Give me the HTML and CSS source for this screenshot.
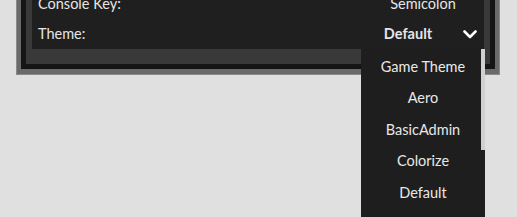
FILE: index.html
```html
<!DOCTYPE html>
<html>
<head>
    <link rel="stylesheet" href="styles.css">
</head>
<body>
    <div class="frame">
        <div class="frame-inner">
            <div class="frame-body">
                <div class="panel">
                    <div class="row">
                        <div class="label">Console Key:</div>
                        <div class="value">Semicolon</div>
                    </div>
                    <div class="row">
                        <div class="label">Theme:</div>
                        <div class="value select">
                            <span class="select-text">Default</span>
                            <span class="select-arrow">
                                <svg width="14" height="9" viewBox="0 0 14 9">
                                    <path d="M1.5 1.5 L7 7 L12.5 1.5" fill="none" stroke="#ffffff" stroke-width="2.6" stroke-linecap="round" stroke-linejoin="round"/>
                                </svg>
                            </span>
                            <div class="menu">
                                <div class="menu-item">Game Theme</div>
                                <div class="menu-item">Aero</div>
                                <div class="menu-item">BasicAdmin</div>
                                <div class="menu-item">Colorize</div>
                                <div class="menu-item">Default</div>
                                <div class="scroll-thumb"></div>
                            </div>
                        </div>
                    </div>
                </div>
            </div>
        </div>
    </div>
</body>
</html>
```

FILE: styles.css
```css
body {
    margin: 0;
    background-color: #e0e0e0;
    font-family: 'Lato', 'Liberation Sans', sans-serif;
    font-size: 14.5px;
    color: #e6e6e6;
    overflow: hidden;
    height: 217px;
}

/* frame layers: light edge, gray, black, dark gray, panel */
.frame {
    width: 474px;
    margin: -26px 0 0 16px;
    border: 1px solid #8a8a8a;
    border-top: none;
    background: #6a6a6a;
    padding: 4px 4px 5px 4px;
}

.frame-inner {
    background: #151515;
    padding: 5px;
}

.frame-body {
    background: #393939;
    padding: 6px 6px 15px 6px;
}

.panel {
    background: #1f1f1f;
}

.row {
    display: flex;
    align-items: center;
    justify-content: space-between;
    height: 30px;
    padding-left: 6px;
}

.label {
    line-height: 30px;
}

.value {
    width: 124px;
    margin-right: -1px;
    text-align: center;
    line-height: 30px;
}

.select {
    position: relative;
    display: flex;
    align-items: center;
}

.select-text {
    flex: 1;
    text-align: center;
    font-weight: bold;
}

.select-arrow {
    width: 30px;
    display: flex;
    justify-content: center;
    align-items: center;
}

.select-arrow svg {
    display: block;
}

.menu {
    position: absolute;
    top: 30px;
    left: 0;
    width: 124px;
    height: 180px;
    padding-top: 1.5px;
    box-sizing: border-box;
    background: #1e1e1e;
    z-index: 5;
}

.menu-item {
    height: 31.5px;
    line-height: 31.5px;
    text-align: center;
    color: #e8e8e8;
}

.scroll-thumb {
    position: absolute;
    top: 0;
    right: 0;
    width: 4px;
    height: 101px;
    background: #d0d0d0;
}
```
